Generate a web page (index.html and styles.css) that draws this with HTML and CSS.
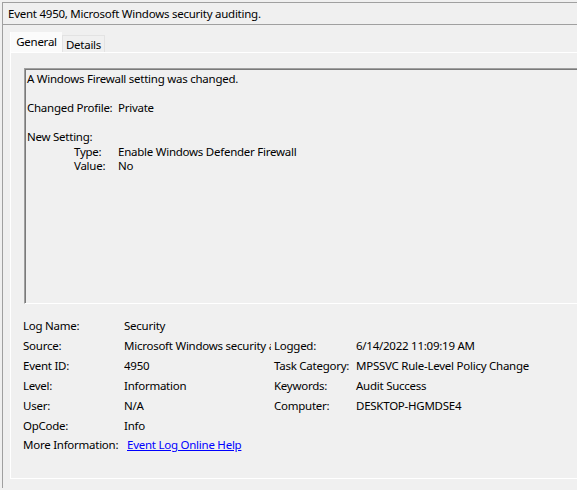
FILE: index.html
```html
<!DOCTYPE html>
<html lang="en">
<head>
  <meta charset="UTF-8">
  <title>Event Properties - Event 4950</title>
  <link rel="stylesheet" href="styles.css">
</head>
<body>

  <div class="window">
    <div class="title">Event 4950, Microsoft Windows security auditing.</div>

    <div class="body">
      <div class="tabs">
        <div class="tab active">General</div>
        <div class="tab">Details</div>
      </div>

      <div class="panel">
        <!-- event description -->
        <div class="desc">
          <div class="line">A Windows Firewall setting was changed.</div>
          <div class="line blank"></div>
          <div class="line pair"><span>Changed Profile:</span><span>Private</span></div>
          <div class="line blank"></div>
          <div class="line">New Setting:</div>
          <div class="line pair sub"><span>Type:</span><span>Enable Windows Defender Firewall</span></div>
          <div class="line pair sub"><span>Value:</span><span>No</span></div>
        </div>

        <!-- event fields -->
        <div class="fields">
          <div class="lbl">Log Name:</div>
          <div class="val">Security</div>
          <div class="lbl2"></div>
          <div class="val2"></div>

          <div class="lbl">Source:</div>
          <div class="val">Microsoft Windows security auditing.</div>
          <div class="lbl2">Logged:</div>
          <div class="val2">6/14/2022 11:09:19 AM</div>

          <div class="lbl">Event ID:</div>
          <div class="val">4950</div>
          <div class="lbl2">Task Category:</div>
          <div class="val2">MPSSVC Rule-Level Policy Change</div>

          <div class="lbl">Level:</div>
          <div class="val">Information</div>
          <div class="lbl2">Keywords:</div>
          <div class="val2">Audit Success</div>

          <div class="lbl">User:</div>
          <div class="val">N/A</div>
          <div class="lbl2">Computer:</div>
          <div class="val2">DESKTOP-HGMDSE4</div>

          <div class="lbl">OpCode:</div>
          <div class="val">Info</div>
          <div class="lbl2"></div>
          <div class="val2"></div>

          <div class="lbl">More Information:</div>
          <div class="val"><a href="#" class="link">Event Log Online Help</a></div>
          <div class="lbl2"></div>
          <div class="val2"></div>
        </div>
      </div>
    </div>
  </div>

</body>
</html>
```

FILE: styles.css
```css
html, body { margin: 0; overflow: hidden; }
body { background: #f0f0f0; color: #000; font-family: "Noto Sans", "Open Sans", sans-serif; font-size: 11.5px; letter-spacing: -0.25px; width: 577px; height: 490px; }

.window { margin: 2px 0 0 2px; width: 720px; height: 486px; border-top: 1px solid #a0a0a0; border-left: 1px solid #a0a0a0; box-sizing: border-box; }
.title { height: 21px; line-height: 21px; padding-left: 5px; border-bottom: 1px solid #a0a0a0; white-space: nowrap; }

.body { padding-left: 7px; }
.tabs { display: flex; align-items: flex-end; height: 20px; margin-top: 7px; }
.tab { height: 17px; line-height: 17px; width: 43px; text-align: center; background: #f0f0f0; border: 1px solid #e3e3e3; border-bottom: none; box-sizing: border-box; }
.tab.active { height: 20px; line-height: 20px; width: 52px; background: #fbfbfb; border: none; border-left: 1px solid #fff; }

.panel { height: 427px; box-sizing: border-box; padding: 15px 0 0 13px; border-top: 1px solid #fff; border-left: 1px solid #fff; border-bottom: 1px solid #fff; }

.desc { height: 236px; box-sizing: border-box; padding: 3px 0 0 2px; border: 1px solid; border-color: #a0a0a0 #fff #fff #a0a0a0; box-shadow: inset 1px 1px 0 #7a7a7a; }
.line { height: 14.5px; line-height: 14.5px; white-space: nowrap; }
.pair { display: grid; grid-template-columns: 91px auto; }
.pair.sub { grid-template-columns: 44px auto; padding-left: 47px; }

.fields { display: grid; grid-template-columns: 101px 150px 82px auto; grid-auto-rows: 20px; grid-template-rows: repeat(6, 20px) 19px; align-items: center; margin: 11px 0 0 -1px; white-space: nowrap; }
.val { overflow: hidden; margin-right: 3px; }
.link { color: #0000ff; padding-left: 3px; }
```
